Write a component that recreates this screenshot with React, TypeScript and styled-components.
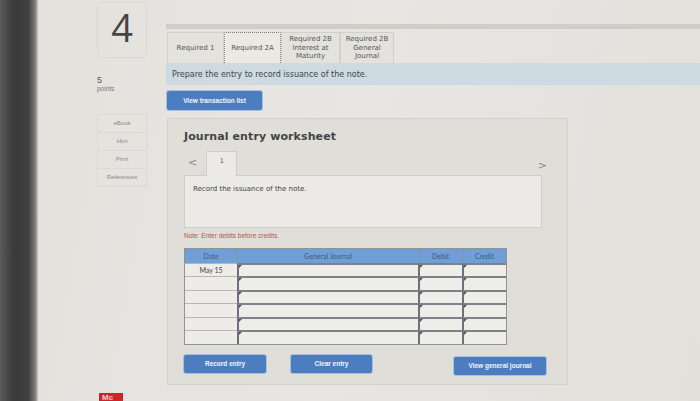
import styled, { createGlobalStyle } from "styled-components";

const Global = createGlobalStyle`
  html, body { margin: 0; padding: 0; }
  body { font-family: "DejaVu Sans", Verdana, sans-serif; }
`;

const Page = styled.div`
  width: 700px;
  height: 401px;
  overflow: hidden;
  display: flex;
  background: linear-gradient(100deg, #e3e1dc 0%, #e8e6e2 50%, #e2e0db 100%);
`;

const Bezel = styled.div`
  width: 38px;
  flex-shrink: 0;
  background: linear-gradient(to right, #5c5c5c 0%, #3a3a3a 35%, #404040 75%, #7d7b78 92%, #c9c7c2 100%);
`;

const Sidebar = styled.aside`
  width: 50px;
  margin-left: 59px;
  padding-top: 2px;
  display: flex;
  flex-direction: column;
`;

const NumBox = styled.div`
  height: 56px;
  border: 1px solid #d9d7d2;
  border-radius: 4px;
  display: flex;
  align-items: center;
  justify-content: center;
  font-family: "Open Sans", sans-serif;
  font-size: 38px;
  line-height: 1;
  color: #444;
  padding-bottom: 6px;
  box-sizing: border-box;
`;

const Points = styled.div`
  margin-top: 18px;
  font-family: "Liberation Sans", Arial, sans-serif;
  color: #555;
  line-height: 1;
  b { display: block; font-weight: normal; font-size: 9px; }
  span { display: block; font-size: 6.5px; color: #777; margin-top: 1px; }
`;

const SideList = styled.div`
  margin-top: 21px;
  display: flex;
  flex-direction: column;
  border: 1px solid #dad8d3;
`;

const SideItem = styled.div`
  height: 17px;
  display: flex;
  align-items: center;
  justify-content: center;
  font-family: "Liberation Sans", Arial, sans-serif;
  font-size: 6px;
  color: #8a8884;
  & + & { border-top: 1px solid #dad8d3; }
`;

const Logo = styled.div`
  margin-top: auto;
  margin-left: 2px;
  width: 24px;
  height: 8px;
  background: #c9252c;
  color: #f3d0d0;
  font-family: "Liberation Sans", Arial, sans-serif;
  font-weight: bold;
  font-size: 8px;
  line-height: 10px;
  padding-left: 3px;
  box-sizing: border-box;
  overflow: hidden;
`;

const Main = styled.main`
  margin-left: 19px;
  flex: 1;
  padding-top: 24px;
  display: flex;
  flex-direction: column;
  align-items: flex-start;
`;

const TopBar = styled.div`
  align-self: stretch;
  height: 5px;
  background: #cfcdc8;
`;

const Tabs = styled.div`
  margin-top: 3px;
  height: 31px;
  display: flex;
  padding-left: 1px;
`;

const Tab = styled.div<{ $active?: boolean; $w: number }>`
  width: ${(p) => p.$w}px;
  box-sizing: border-box;
  display: flex;
  align-items: center;
  justify-content: center;
  text-align: center;
  font-size: 7px;
  line-height: 8.5px;
  color: #555;
  background: ${(p) => (p.$active ? "#ebe9e4" : "#e4e2dd")};
  border: 1px solid #d2d0cb;
  border-top: ${(p) => (p.$active ? "1px dotted #777" : "1px solid #d2d0cb")};
  border-left: ${(p) => (p.$active ? "1px dotted #888" : "1px solid #d2d0cb")};
  border-right: ${(p) => (p.$active ? "1px dotted #888" : "1px solid #d2d0cb")};
  border-bottom: none;
`;

const Instruction = styled.div`
  align-self: stretch;
  height: 22px;
  background: #cddae2;
  display: flex;
  align-items: center;
  padding-left: 6px;
  font-size: 8px;
  color: #444;
`;

const BlueButton = styled.button<{ $w: number }>`
  width: ${(p) => p.$w}px;
  height: 18px;
  border: none;
  border-radius: 2px;
  background: #4c7ebf;
  color: #f2f5fa;
  font-family: "Liberation Sans", Arial, sans-serif;
  font-weight: bold;
  font-size: 6.5px;
  padding: 0;
  box-shadow: 0 0 0 1px #a9c0dd;
`;

const ViewButton = styled(BlueButton)`
  margin-top: 6px;
  margin-left: 1px;
  height: 19px;
`;

const Panel = styled.section`
  margin-top: 8px;
  margin-left: 1px;
  width: 401px;
  height: 267px;
  box-sizing: border-box;
  background: #e0ded9;
  border: 1px solid #d3d1cc;
  padding: 11px 0 0 16px;
  display: flex;
  flex-direction: column;
`;

const Title = styled.h2`
  margin: 0;
  font-size: 11px;
  font-weight: bold;
  color: #444;
  letter-spacing: 0.1px;
`;

const NavRow = styled.div`
  margin-top: 7px;
  width: 367px;
  height: 25px;
  display: flex;
  align-items: flex-end;
`;

const Arrow = styled.span<{ $right?: boolean }>`
  font-size: 11px;
  color: #888;
  align-self: center;
  margin-left: ${(p) => (p.$right ? "auto" : "4px")};
  margin-top: ${(p) => (p.$right ? "6px" : "0")};
  margin-right: ${(p) => (p.$right ? "4px" : "0")};
`;

const PageTab = styled.div`
  margin-left: 9px;
  width: 31px;
  height: 25px;
  box-sizing: border-box;
  border: 1px solid #cfcdc8;
  border-bottom: none;
  background: #eceae6;
  margin-bottom: -1px;
  display: flex;
  justify-content: center;
  padding-top: 5px;
  font-size: 6.5px;
  color: #555;
  z-index: 1;
`;

const Desc = styled.div`
  width: 358px;
  height: 53px;
  box-sizing: border-box;
  background: #eceae6;
  border: 1px solid #cfcdc8;
  padding: 9px 0 0 8px;
  font-size: 7px;
  color: #444;
`;

const Note = styled.div`
  margin-top: 4px;
  font-family: "Liberation Sans", Arial, sans-serif;
  font-size: 6.5px;
  color: #b5524f;
`;

const Table = styled.div`
  margin-top: 9px;
  width: 323px;
  display: grid;
  grid-template-columns: 52px 181px 44px 44px;
  grid-auto-rows: 13.5px;
  border: 1px solid #8e929b;
  box-sizing: border-box;
  font-family: "Lato", "Liberation Sans", sans-serif;
`;

const Head = styled.div`
  background: #6f9fd6;
  color: #3a5a88;
  font-size: 7px;
  height: 14px;
  display: flex;
  align-items: center;
  justify-content: center;
  & + & { border-left: 1px solid #8e929b; }
`;

const DateCell = styled.div`
  background: #eeece8;
  border-top: 1px solid #b7b6b3;
  display: flex;
  align-items: center;
  justify-content: center;
  font-size: 7px;
  color: #444;
`;

const Input = styled.div`
  background: #efede9;
  border-top: 2px solid #7f8188;
  border-left: 2px solid #6d7078;
  position: relative;
  &::before {
    content: "";
    position: absolute;
    left: 0;
    top: 0;
    border-top: 3px solid #555;
    border-right: 3px solid transparent;
  }
`;

const Actions = styled.div`
  margin-top: 10px;
  width: 362px;
  display: flex;
  align-items: flex-start;
  gap: 25px;
`;

const JournalButton = styled(BlueButton)`
  margin-left: auto;
  margin-top: 2px;
`;

const rows = ["May 15", "", "", "", "", ""];

export default function App() {
  return (
    <Page>
      <Global />
      <Bezel />
      <Sidebar>
        <NumBox>4</NumBox>
        <Points>
          <b>5</b>
          <span>points</span>
        </Points>
        <SideList>
          <SideItem>eBook</SideItem>
          <SideItem>Hint</SideItem>
          <SideItem>Print</SideItem>
          <SideItem>References</SideItem>
        </SideList>
        <Logo>Mc</Logo>
      </Sidebar>
      <Main>
        <TopBar />
        <Tabs>
          <Tab $w={57}>Required 1</Tab>
          <Tab $w={57} $active>Required 2A</Tab>
          <Tab $w={59}>Required 2B<br />Interest at<br />Maturity</Tab>
          <Tab $w={54}>Required 2B<br />General<br />Journal</Tab>
        </Tabs>
        <Instruction>Prepare the entry to record issuance of the note.</Instruction>
        <ViewButton $w={95}>View transaction list</ViewButton>
        <Panel>
          <Title>Journal entry worksheet</Title>
          <NavRow>
            <Arrow>&lt;</Arrow>
            <PageTab>1</PageTab>
            <Arrow $right>&gt;</Arrow>
          </NavRow>
          <Desc>Record the issuance of the note.</Desc>
          <Note>Note: Enter debits before credits.</Note>
          <Table>
            <Head>Date</Head>
            <Head>General Journal</Head>
            <Head>Debit</Head>
            <Head>Credit</Head>
            {rows.map((d, i) => [
              <DateCell key={`d${i}`}>{d}</DateCell>,
              <Input key={`g${i}`} />,
              <Input key={`a${i}`} />,
              <Input key={`c${i}`} />,
            ])}
          </Table>
          <Actions>
            <BlueButton $w={82}>Record entry</BlueButton>
            <BlueButton $w={81}>Clear entry</BlueButton>
            <JournalButton $w={92}>View general journal</JournalButton>
          </Actions>
        </Panel>
      </Main>
    </Page>
  );
}
